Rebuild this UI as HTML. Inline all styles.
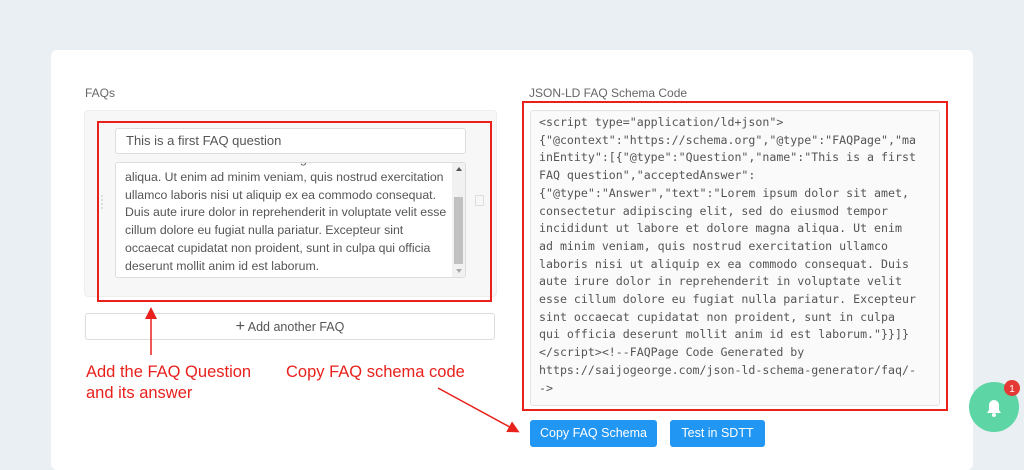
<!DOCTYPE html>
<html><head><style>
body{margin:0;width:1024px;height:449px;background:#e9eff2;font-family:"Liberation Sans",sans-serif;position:relative;overflow:hidden}
.card{position:absolute;left:51px;top:50px;width:922px;height:420px;background:#fff;border-radius:6px}
.abs{position:absolute}
.lbl{font-size:12px;color:#666}
.mono{font-family:"DejaVu Sans Mono",monospace;font-size:11.6px;color:#555;line-height:17.7px;white-space:pre}
.ta{font-size:12.3px;color:#555;line-height:17.8px;white-space:pre}
.red{color:#e8211d;font-size:16.5px;line-height:21px}
.btn{background:#2196f3;color:#fff;font-size:12.5px;border-radius:3px;text-align:center;line-height:27px}
</style></head><body>
<div class="card"></div>
<div class="abs lbl" style="left:85px;top:86px">FAQs</div>
<div class="abs lbl" style="left:529px;top:86px">JSON-LD FAQ Schema Code</div>
<div class="abs" style="left:84px;top:110px;width:411px;height:185px;background:#f7f7f7;border:1px solid #eee;border-radius:4px"></div>
<div class="abs" style="left:97px;top:121px;width:391px;height:177px;border:2px solid #e8211d"></div>
<div class="abs" style="left:115px;top:128px;width:349px;height:24px;background:#fff;border:1px solid #ddd;border-radius:3px;font-size:13px;color:#555;line-height:24px;text-indent:10px">This is a first FAQ question</div>
<div class="abs" style="left:115px;top:162px;width:349px;height:114px;background:#fff;border:1px solid #ddd;border-radius:3px;overflow:hidden">
<div class="ta" style="position:absolute;left:9px;top:-12px">incididunt ut labore et dolore magna consectetur sed eiusmod magna
aliqua. Ut enim ad minim veniam, quis nostrud exercitation
ullamco laboris nisi ut aliquip ex ea commodo consequat.
Duis aute irure dolor in reprehenderit in voluptate velit esse
cillum dolore eu fugiat nulla pariatur. Excepteur sint
occaecat cupidatat non proident, sunt in culpa qui officia
deserunt mollit anim id est laborum.</div>
<div style="position:absolute;right:0;top:0;width:13px;height:114px;background:#f1f1f1"></div>
<div style="position:absolute;right:2px;top:34px;width:9px;height:67px;background:#c1c1c1"></div>
<div style="position:absolute;right:3px;top:4px;width:0;height:0;border:3px solid transparent;border-bottom:4px solid #555;border-top:0"></div>
<div style="position:absolute;right:3px;bottom:4px;width:0;height:0;border:3px solid transparent;border-top:4px solid #aaa;border-bottom:0"></div>
</div>
<div class="abs" style="left:475px;top:195px;width:7px;height:9px;border:1px solid #ddd;border-radius:1px"></div>
<div class="abs" style="left:101px;top:195px;width:2px;height:14px;border-left:2px dotted #ddd"></div>
<div class="abs" style="left:85px;top:313px;width:408px;height:25px;border:1px solid #ddd;border-radius:3px;font-size:12.5px;color:#555;text-align:center;line-height:25px"><span style="font-size:16px">+</span> Add another FAQ</div>
<div class="abs" style="left:522px;top:101px;width:422px;height:306px;border:2px solid #e8211d"></div>
<div class="abs" style="left:530px;top:110px;width:408px;height:294px;background:#fafafa;border:1px solid #e3e3e3;border-radius:3px"></div>
<div class="abs mono" style="left:539px;top:114px">&lt;script type="application/ld+json"&gt;
{"@context":"https://schema.org","@type":"FAQPage","ma
inEntity":[{"@type":"Question","name":"This is a first
FAQ question","acceptedAnswer":
{"@type":"Answer","text":"Lorem ipsum dolor sit amet,
consectetur adipiscing elit, sed do eiusmod tempor
incididunt ut labore et dolore magna aliqua. Ut enim
ad minim veniam, quis nostrud exercitation ullamco
laboris nisi ut aliquip ex ea commodo consequat. Duis
aute irure dolor in reprehenderit in voluptate velit
esse cillum dolore eu fugiat nulla pariatur. Excepteur
sint occaecat cupidatat non proident, sunt in culpa
qui officia deserunt mollit anim id est laborum."}}]}
&lt;/script&gt;&lt;!--FAQPage Code Generated by
https://saijogeorge.com/json-ld-schema-generator/faq/-
-&gt;</div>
<div class="abs btn" style="left:530px;top:420px;width:127px">Copy FAQ Schema</div>
<div class="abs btn" style="left:670px;top:420px;width:95px">Test in SDTT</div>
<div class="abs red" style="left:86px;top:362px">Add the FAQ Question<br>and its answer</div>
<div class="abs red" style="left:286px;top:362px">Copy FAQ schema code</div>
<svg class="abs" style="left:0;top:0" width="1024" height="449">
<defs><marker id="a" markerWidth="8" markerHeight="8" refX="6" refY="4" orient="auto"><path d="M0,0 L8,4 L0,8z" fill="#e8211d"/></marker></defs>
<line x1="151" y1="355" x2="151" y2="310" stroke="#e8211d" stroke-width="1.5" marker-end="url(#a)"/>
<line x1="438" y1="388" x2="517" y2="431" stroke="#e8211d" stroke-width="1.5" marker-end="url(#a)"/>
<circle cx="994" cy="407" r="25" fill="#5dd5a4"/>
<path d="M987,413 h14 l-2,-3 v-5 a5,5 0 0 0 -10,0 v5 z" fill="#fff"/>
<circle cx="994" cy="415" r="2" fill="#fff"/>
<circle cx="1012" cy="388" r="8" fill="#e53935"/>
<text x="1012" y="392" font-size="10" fill="#fff" text-anchor="middle" font-family="Liberation Sans">1</text>
</svg>
</body></html>
